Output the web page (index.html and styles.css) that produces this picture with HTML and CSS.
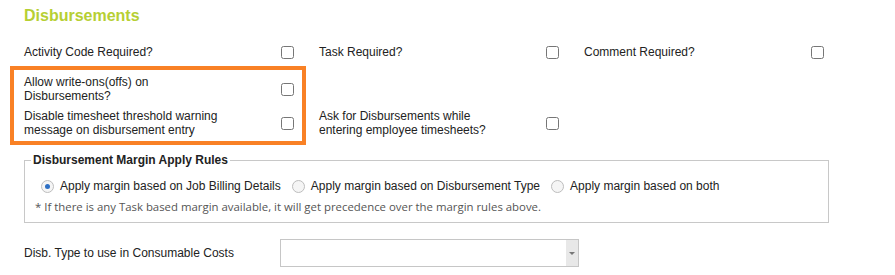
FILE: index.html
```html
<!DOCTYPE html>
<html lang="en">
  <head>
    <meta charset="UTF-8" />
    <title>Disbursements</title>
    <link rel="stylesheet" href="styles.css">
  </head>
  <body>
    <div class="page">
      <p class="section-title">Disbursements</p>

      <!-- Flags -->
      <div class="flag-grid">
        <div class="highlight"></div>

        <label class="flag-label" for="activityCode">Activity Code Required?</label>
        <input id="activityCode" class="flag-check" type="checkbox" />
        <label class="flag-label" for="taskRequired">Task Required?</label>
        <input id="taskRequired" class="flag-check" type="checkbox" />
        <label class="flag-label" for="commentRequired">Comment Required?</label>
        <input id="commentRequired" class="flag-check" type="checkbox" />

        <label class="flag-label" for="writeOns">Allow write-ons(offs) on<br />Disbursements?</label>
        <input id="writeOns" class="flag-check" type="checkbox" />
        <span></span><span></span><span></span><span></span>

        <label class="flag-label" for="thresholdWarning">Disable timesheet threshold warning<br />message on disbursement entry</label>
        <input id="thresholdWarning" class="flag-check" type="checkbox" />
        <label class="flag-label" for="askDisb">Ask for Disbursements while<br />entering employee timesheets?</label>
        <input id="askDisb" class="flag-check" type="checkbox" />
      </div>

      <!-- Margin rules -->
      <fieldset class="rules">
        <legend class="rules-title">Disbursement Margin Apply Rules</legend>
        <div class="radio-row">
          <label class="radio-option"><span class="radio checked"></span>Apply margin based on Job Billing Details</label>
          <label class="radio-option"><span class="radio"></span>Apply margin based on Disbursement Type</label>
          <label class="radio-option"><span class="radio"></span>Apply margin based on both</label>
        </div>
        <p class="rules-note">* If there is any Task based margin available, it will get precedence over the margin rules above.</p>
      </fieldset>

      <!-- Consumable costs -->
      <div class="field-row">
        <p class="field-label">Disb. Type to use in Consumable Costs</p>
        <div class="select">
          <div class="select-value"></div>
          <div class="select-arrow"><span class="caret"></span></div>
        </div>
      </div>
    </div>
  </body>
</html>
```

FILE: styles.css
```css
* {
  margin: 0;
  padding: 0;
  box-sizing: border-box;
}
body {
  background-color: #fff;
  color: #222;
  font-family: "Liberation Sans", Arial, sans-serif;
  font-size: 12px;
}

.page {
  padding: 0 24px;
}

.section-title {
  color: #b6cf33;
  font-size: 16px;
  font-weight: bold;
  line-height: 18px;
  margin-top: 7px;
  margin-bottom: 6px;
}

.flag-grid {
  position: relative;
  display: grid;
  grid-template-columns: 257px 38px 227px 38px 227px 13px;
  grid-template-rows: 42px 32px 36px;
  align-items: center;
}

.flag-label {
  line-height: 14px;
}

.flag-check {
  width: 13px;
  height: 13px;
  margin: 0;
}

/* annotation box round the two flags */
.highlight {
  position: absolute;
  left: -14px;
  top: 35px;
  width: 296px;
  height: 79px;
  border: 4px solid #f98125;
  pointer-events: none;
}

.rules {
  width: 805px;
  margin-top: 12px;
  border: 1px solid #c8c8c8;
  padding: 0 6px 8px 10px;
}

.rules-title {
  font-weight: bold;
  padding: 0 2px;
  margin-left: -4px;
  line-height: 14px;
}

.radio-row {
  display: flex;
  gap: 11px;
  margin-top: 12px;
  margin-left: 6px;
}

.radio-option {
  display: flex;
  align-items: center;
  gap: 6px;
  line-height: 14px;
}

.radio {
  position: relative;
  width: 13px;
  height: 13px;
  border-radius: 50%;
  border: 1px solid #bdbdbd;
  background-color: #f5f5f5;
}

.radio.checked:after {
  content: "";
  position: absolute;
  top: 3px;
  left: 3px;
  width: 5px;
  height: 5px;
  border-radius: 50%;
  background-color: #2d6fc4;
}

.rules-note {
  margin-top: 6px;
  font-family: "Open Sans", sans-serif;
  font-size: 11.4px;
  line-height: 15px;
  color: #555;
}

.field-row {
  display: flex;
  align-items: center;
  margin-top: 16px;
}

.field-label {
  width: 256px;
}

.select {
  display: flex;
  width: 299px;
  height: 28px;
  border: 1px solid #c6c6c6;
}

.select-value {
  flex: 1;
}

.select-arrow {
  width: 12px;
  background-color: #e8e8e8;
  display: flex;
  align-items: center;
  justify-content: center;
}

.caret {
  width: 0;
  height: 0;
  border-left: 3px solid transparent;
  border-right: 3px solid transparent;
  border-top: 3px solid #777;
}
```
